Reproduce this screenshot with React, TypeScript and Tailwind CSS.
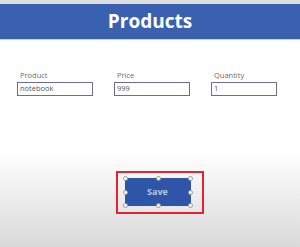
import React from "react";

const fields = [
  { label: "Product", value: "notebook", w: "w-[76px]" },
  { label: "Price", value: "999", w: "w-[76px]" },
  { label: "Quantity", value: "1", w: "w-[66px]" },
];

function Handle({ className }: { className: string }) {
  return (
    <span
      className={`absolute h-[5px] w-[5px] rounded-full border border-[#9a9a9a] bg-white ${className}`}
    />
  );
}

export default function App() {
  return (
    <div className="flex h-[247px] w-[300px] flex-col overflow-hidden bg-white font-['Open_Sans',sans-serif]">
      {/* barra superior */}
      <div className="h-[4px] bg-[#dedede]" />
      <div className="flex h-[36px] items-center justify-center border-b border-[#c8d3ea] bg-[#3961b0]">
        <h1 className="text-[19px] font-bold leading-none text-white">Products</h1>
      </div>

      {/* campos */}
      <div className="flex gap-[21px] pl-[17px] pt-[30px]">
        {fields.map((f) => (
          <div key={f.label} className="flex flex-col">
            <span className="pl-[3px] text-[7.5px] leading-[10px] text-[#6b6b6b]">
              {f.label}
            </span>
            <div
              className={`mt-[2px] flex h-[14px] items-center border-[1.5px] border-[#6a6f8f] px-[2px] text-[7.5px] text-[#555] ${f.w}`}
            >
              {f.value}
            </div>
          </div>
        ))}
      </div>

      {/* zona con degradado */}
      <div className="mt-[56px] flex flex-1 justify-center bg-gradient-to-b from-white to-[#d9d9d9] pt-[19px]">
        <div className="ml-[19px] h-[43px] w-[88px] border-2 border-[#e52430] p-[5px] pl-[7px]">
          <div className="relative flex h-[28px] w-[66px] items-center justify-center bg-[#2f55a8]">
            <span className="text-[9px] font-bold text-[#b9c6e3]">Save</span>
            <Handle className="-left-[2px] -top-[2px]" />
            <Handle className="left-[31px] -top-[2px]" />
            <Handle className="-right-[2px] -top-[2px]" />
            <Handle className="-left-[2px] top-[12px]" />
            <Handle className="-right-[2px] top-[12px]" />
            <Handle className="-left-[2px] -bottom-[2px]" />
            <Handle className="left-[31px] -bottom-[2px]" />
            <Handle className="-right-[2px] -bottom-[2px]" />
          </div>
        </div>
      </div>
    </div>
  );
}
